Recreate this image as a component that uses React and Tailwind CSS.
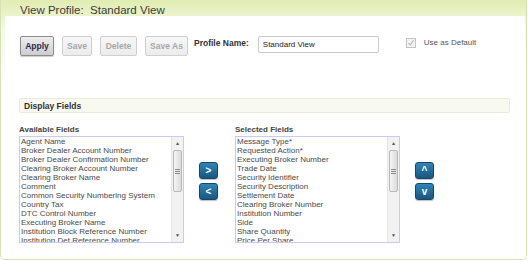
import React from 'react';

const available = [
    'Agent Name',
    'Broker Dealer Account Number',
    'Broker Dealer Confirmation Number',
    'Clearing Broker Account Number',
    'Clearing Broker Name',
    'Comment',
    'Common Security Numbering System',
    'Country Tax',
    'DTC Control Number',
    'Executing Broker Name',
    'Institution Block Reference Number',
    'Institution Det Reference Number',
];

const selected = [
    'Message Type*',
    'Requested Action*',
    'Executing Broker Number',
    'Trade Date',
    'Security Identifier',
    'Security Description',
    'Settlement Date',
    'Clearing Broker Number',
    'Institution Number',
    'Side',
    'Share Quantity',
    'Price Per Share',
];

const ListBox = ({ items, width }) => {
    return (
        <div className={`${width} h-[107px] border border-[#c9c9f2] bg-white flex overflow-hidden`}>
            <div className="flex-1 pl-[1px] overflow-hidden">
                {items.map((item) => (
                    <div key={item} className="text-[8px] leading-[9px] text-[#4a4a4a] whitespace-nowrap">
                        {item}
                    </div>
                ))}
            </div>
            {/* Scrollbar */}
            <div className="w-[12px] bg-[#f2f2f2] border-l border-[#e6e6e6] flex flex-col">
                <div className="h-[13px] flex items-center justify-center text-[5px] text-[#555]">▲</div>
                <div className="h-[42px] mx-[1px] rounded-[2px] border border-[#b9b9b9] bg-[linear-gradient(to_right,#f4f4f4,#dcdcdc)] flex items-center justify-center">
                    <div className="flex flex-col gap-[1px]">
                        <div className="w-[5px] h-[1px] bg-[#8a8a8a]"></div>
                        <div className="w-[5px] h-[1px] bg-[#8a8a8a]"></div>
                        <div className="w-[5px] h-[1px] bg-[#8a8a8a]"></div>
                    </div>
                </div>
                <div className="flex-1"></div>
                <div className="h-[13px] flex items-center justify-center text-[5px] text-[#555]">▼</div>
            </div>
        </div>
    );
};

const BlueButton = ({ children }) => (
    <button className="w-[19px] h-[17px] rounded-[3px] border border-[#164766] bg-[linear-gradient(to_bottom,#2f84b8,#18577f)] text-white font-bold text-[10px] leading-[10px] flex items-center justify-center shadow-[0_1px_1px_rgba(0,0,0,0.25)]">
        {children}
    </button>
);

const DisabledButton = ({ children, className }) => (
    <button className={`${className} block h-[20px] rounded-[2px] border border-[#cfcfcf] bg-[linear-gradient(to_bottom,#f7f7f7,#ececec)] text-[#a8a8a8] font-bold text-[8.5px] leading-[10px]`}>
        {children}
    </button>
);

const App = () => {
    return (
        <div className="w-[528px] h-[261px] bg-white font-['Liberation_Sans',Arial,sans-serif]">
            <div className="w-[527px] h-[260px] border-x border-b border-[#d7e1b6] rounded-b-[5px] bg-[linear-gradient(to_bottom,#e0ecb2,#f5fae4_30px,#ffffff_80px)] overflow-hidden">
                {/* Header */}
                <div className="h-[16px] pl-[19px] pt-[5px]">
                    <div className="text-[11.5px] leading-[11px] text-[#3a3a3a] whitespace-pre">View Profile:  Standard View</div>
                </div>

                {/* Body */}
                <div className="ml-[4px] mr-[1px] h-[243px] bg-white pt-[20px]">
                    {/* Toolbar */}
                    <div className="flex items-start h-[20px] pl-[15px]">
                        <button className="block w-[34px] h-[20px] rounded-[2px] border border-[#8c8c8c] bg-[linear-gradient(to_bottom,#eeeeee,#cdcdcd)] text-[#1f2c4c] font-bold text-[8.5px] leading-[10px] shadow-[0_1px_1px_rgba(0,0,0,0.2)]">
                            Apply
                        </button>
                        <DisabledButton className="ml-[8px] w-[30px]">Save</DisabledButton>
                        <DisabledButton className="ml-[8px] w-[37px]">Delete</DisabledButton>
                        <DisabledButton className="ml-[8px] w-[43px]">Save As</DisabledButton>
                        <div className="ml-[6px] mt-[2px] text-[8.5px] leading-[10px] font-bold text-[#333] whitespace-nowrap">Profile Name:</div>
                        <div className="ml-[9px] w-[121px] h-[17px] border border-[#cccccc] rounded-[2px] bg-white flex items-center pl-[4px] text-[8px] leading-[10px] text-[#222]">
                            Standard View
                        </div>
                        <div className="ml-[27px] mt-[2px] w-[10px] h-[10px] border border-[#c4c4c4] bg-[#f3f3f3] flex items-center justify-center">
                            <svg width="8" height="8" viewBox="0 0 8 8">
                                <path d="M1.5 4.2 L3.2 6 L6.6 1.2" fill="none" stroke="#b5b5b5" strokeWidth="1.1" />
                            </svg>
                        </div>
                        <div className="ml-[8px] mt-[2px] text-[8px] leading-[10px] text-[#555] whitespace-nowrap">Use as Default</div>
                    </div>

                    {/* Display Fields bar */}
                    <div className="ml-[14px] mt-[42px] w-[491px] h-[15px] rounded-[2px] border border-[#e8ecd9] bg-[#f8f9f0] flex items-center pl-[4px]">
                        <span className="text-[8.5px] leading-[10px] font-bold text-[#333]">Display Fields</span>
                    </div>

                    {/* Field lists */}
                    <div className="flex items-start ml-[14px] mt-[12px]">
                        <div className="flex flex-col">
                            <div className="h-[11px] text-[8px] leading-[10px] font-bold text-[#444]">Available Fields</div>
                            <ListBox items={available} width="w-[165px]" />
                        </div>
                        <div className="ml-[15px] pt-[37px] flex flex-col gap-[4px]">
                            <BlueButton>&gt;</BlueButton>
                            <BlueButton>&lt;</BlueButton>
                        </div>
                        <div className="ml-[17px] flex flex-col">
                            <div className="h-[11px] text-[8px] leading-[10px] font-bold text-[#444]">Selected Fields</div>
                            <ListBox items={selected} width="w-[165px]" />
                        </div>
                        <div className="ml-[15px] pt-[37px] flex flex-col gap-[4px]">
                            <BlueButton>^</BlueButton>
                            <BlueButton>v</BlueButton>
                        </div>
                    </div>
                </div>
            </div>
        </div>
    );
};

export default App;
